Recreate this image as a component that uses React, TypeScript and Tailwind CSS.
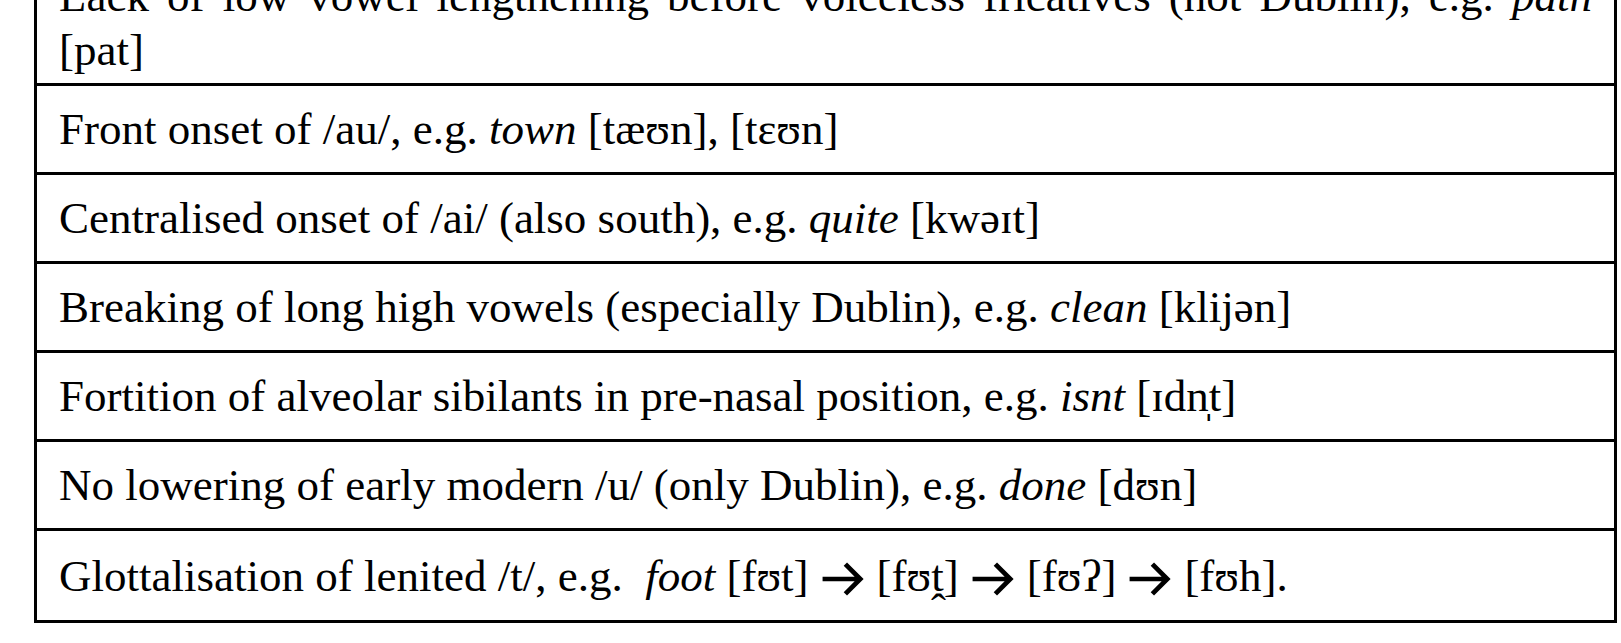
import React from 'react';

function Arrow() {
  return (
    <svg viewBox="0 0 28 24" className="inline-block w-[44px] h-[38px] mx-[12px] align-[-7px]">
      <path d="M1 12 H25 M15.5 2.5 L25 12 L15.5 21.5" fill="none" stroke="black" strokeWidth="3" />
    </svg>
  );
}

const rows: React.ReactNode[] = [
  <>Front onset of /au/, e.g. <i>town</i> [tæʊn], [tɛʊn]</>,
  <>Centralised onset of /ai/ (also south), e.g. <i>quite</i> [kwəɪt]</>,
  <>Breaking of long high vowels (especially Dublin), e.g. <i>clean</i> [klijən]</>,
  <>Fortition of alveolar sibilants in pre-nasal position, e.g. <i>isnt</i> [ɪdn̩t]</>,
  <>No lowering of early modern /u/ (only Dublin), e.g. <i>done</i> [dʊn]</>,
  <>
    Glottalisation of lenited /t/, e.g.&nbsp; <i>foot</i> [fʊt]<Arrow />[fʊṱ]<Arrow />[fʊʔ]<Arrow />[fʊh].
  </>,
];

export default function App() {
  return (
    <div className="w-[1621px] h-[643px] overflow-hidden bg-white text-black font-['Liberation_Serif','DejaVu_Serif',serif] text-[45px] leading-[54px]">
      <div className="ml-[34px] w-[1583px] -mt-[54px] border-x-[3px] border-b-[3px] border-black">
        <div className="h-[140px] border-b-[3px] border-black flex flex-col justify-end px-[22px] pb-[6px]">
          <div className="text-justify [text-align-last:justify] whitespace-nowrap">
            Lack of low vowel lengthening before voiceless fricatives (not Dublin), e.g. <i>path</i>
          </div>
          <div>[pat]</div>
        </div>
        {rows.map((r, i) => (
          <div
            key={i}
            className={
              'h-[89px] flex items-center px-[22px] whitespace-nowrap ' +
              (i < rows.length - 1 ? 'border-b-[3px] border-black' : '')
            }
          >
            <div>{r}</div>
          </div>
        ))}
      </div>
    </div>
  );
}
